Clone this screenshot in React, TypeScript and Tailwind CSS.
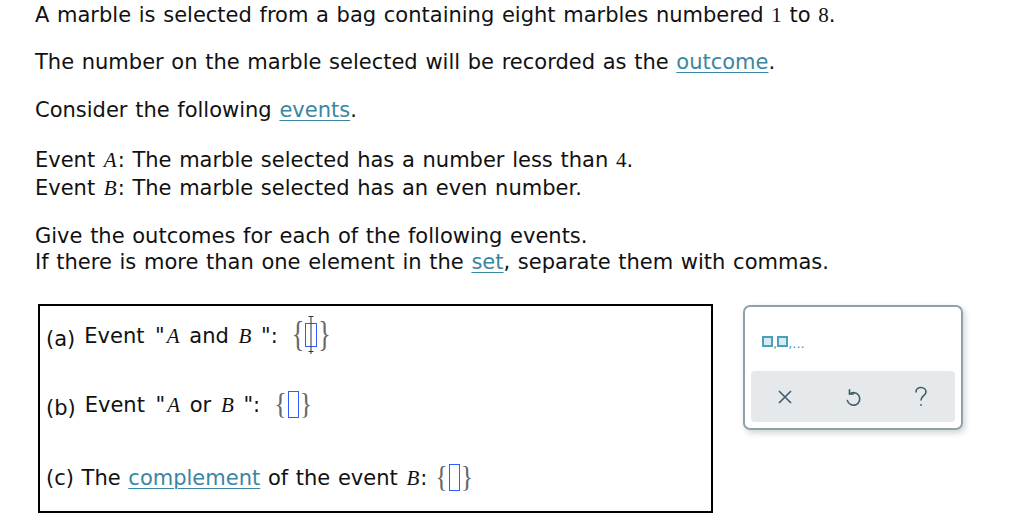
import React from "react";

const sans = { fontFamily: '"DejaVu Sans", Verdana, sans-serif' };

function M({ children, wide = false }: { children: React.ReactNode; wide?: boolean }) {
  return (
    <span
      className={
        wide
          ? "font-['Liberation_Serif',serif] italic text-[21px] mx-[2px]"
          : "font-['Liberation_Serif',serif] italic text-[21px] mx-[1px]"
      }
    >
      {children}
    </span>
  );
}

function N({ children }: { children: React.ReactNode }) {
  return (
    <span className="font-['Liberation_Serif',serif] text-[21px]">{children}</span>
  );
}

function Link({ children }: { children: React.ReactNode }) {
  return (
    <a className="text-[#3a86a1] underline underline-offset-[3px] decoration-1">
      {children}
    </a>
  );
}

function SetInput({ tall = false }: { tall?: boolean }) {
  const brace = tall
    ? "text-[26px] leading-none scale-y-[1.35]"
    : "text-[26px] leading-none scale-y-[1.15]";
  return (
    <span className="inline-flex items-center text-[#666] font-['Liberation_Serif',serif]">
      <span className={brace}>{"{"}</span>
      <span
        className={
          tall
            ? "relative mx-[1px] w-[12px] h-[24px] border-[1.5px] border-[#2f5bff]"
            : "mx-[1px] w-[11px] h-[27px] border-[1.5px] border-[#2f5bff]"
        }
      >
        {tall && (
          <>
            <span className="absolute left-1/2 -translate-x-1/2 -top-[8px] w-[1px] h-[38px] bg-[#333]" />
            <span className="absolute left-1/2 -translate-x-1/2 -top-[8px] w-[5px] h-[1px] bg-[#333]" />
            <span className="absolute left-1/2 -translate-x-1/2 -bottom-[6px] w-[5px] h-[1px] bg-[#333]" />
          </>
        )}
      </span>
      <span className={brace}>{"}"}</span>
    </span>
  );
}

function Square() {
  return <span className="inline-block w-[11px] h-[11px] border-2 border-[#4c9fb7] bg-[#d3ebf1]" />;
}

export default function App() {
  return (
    <div
      className="w-[1024px] h-[524px] bg-white text-[#111] text-[21px] [word-spacing:1px] overflow-hidden"
      style={sans}
    >
      <div className="pl-[35px] leading-[28px]">
        <p className="pt-[1px]">
          A marble is selected from a bag containing eight marbles numbered <N>1</N> to <N>8</N>.
        </p>
        <p className="mt-[19px]">
          The number on the marble selected will be recorded as the <Link>outcome</Link>.
        </p>
        <p className="mt-[20px]">
          Consider the following <Link>events</Link>.
        </p>
        <p className="mt-[22px]">
          Event <M>A</M>: The marble selected has a number less than <N>4</N>.
          <br />
          Event <M>B</M>: The marble selected has an even number.
        </p>
        <p className="mt-[21px] leading-[26px]">
          Give the outcomes for each of the following events.
          <br />
          If there is more than one element in the <Link>set</Link>, separate them with commas.
        </p>
      </div>

      <div className="flex items-start mt-[29px] pl-[38px]">
        <div className="w-[675px] h-[209px] border-2 border-black pl-[6px] pt-[11px] flex flex-col">
          <div className="h-[40px] flex items-center">
            <span className="pt-[6px]">(a)</span>
            <span className="ml-[9px]">
              Event <span className="ml-[3px]">"</span>
              <M wide>A</M> and <M wide>B</M> ":
            </span>
            <span className="ml-[14px]">
              <SetInput tall />
            </span>
          </div>
          <div className="h-[40px] mt-[29px] flex items-center">
            <span className="pt-[6px]">(b)</span>
            <span className="ml-[9px]">
              Event <span className="ml-[3px]">"</span>
              <M wide>A</M> or <M wide>B</M> ":
            </span>
            <span className="ml-[14px]">
              <SetInput />
            </span>
          </div>
          <div className="h-[40px] mt-[33px] flex items-center">
            <span>
              (c) The <Link>complement</Link> of the event <M>B</M>:
            </span>
            <span className="ml-[8px]">
              <SetInput />
            </span>
          </div>
        </div>

        <div className="ml-[30px] mt-[1px] w-[220px] h-[125px] border-2 border-[#8ea2ac] rounded-[7px] shadow-[2px_3px_6px_rgba(0,0,0,0.18)] flex flex-col px-[6px] pb-[6px]">
          <div className="flex-1 flex items-center pl-[11px] pt-[4px]">
            <div
              className="flex items-end text-[#4c9fb7] text-[13px] leading-none [word-spacing:0]"
              style={{ fontFamily: '"DejaVu Sans", sans-serif' }}
            >
              <Square />
              <span className="-mb-[3px]">,</span>
              <Square />
              <span className="-mb-[3px]">,...</span>
            </div>
          </div>
          <div className="h-[51px] rounded-[4px] bg-[#e5e9eb] flex items-center justify-around text-[#3f5c68]">
            <svg width="16" height="16" viewBox="0 0 16 16" fill="none" stroke="currentColor" strokeWidth="1.6">
              <path d="M2 2 L14 14 M14 2 L2 14" />
            </svg>
            <svg width="18" height="20" viewBox="0 0 18 20" fill="none" stroke="currentColor" strokeWidth="1.6" strokeLinecap="round" strokeLinejoin="round">
              <path d="M5.5 7 A6.3 6.3 0 1 1 3.4 13.6" />
              <path d="M5.5 2.8 L5.5 7 L9.5 7" />
            </svg>
            <svg width="16" height="22" viewBox="0 0 16 22" fill="none" stroke="currentColor" strokeWidth="1.6" strokeLinecap="round">
              <path d="M3 6 C3 2.5 6 1.5 8 1.5 C11 1.5 13 3.5 13 6 C13 9.5 8 10 8 14" />
              <circle cx="8" cy="19" r="0.9" fill="currentColor" stroke="none" />
            </svg>
          </div>
        </div>
      </div>
    </div>
  );
}
